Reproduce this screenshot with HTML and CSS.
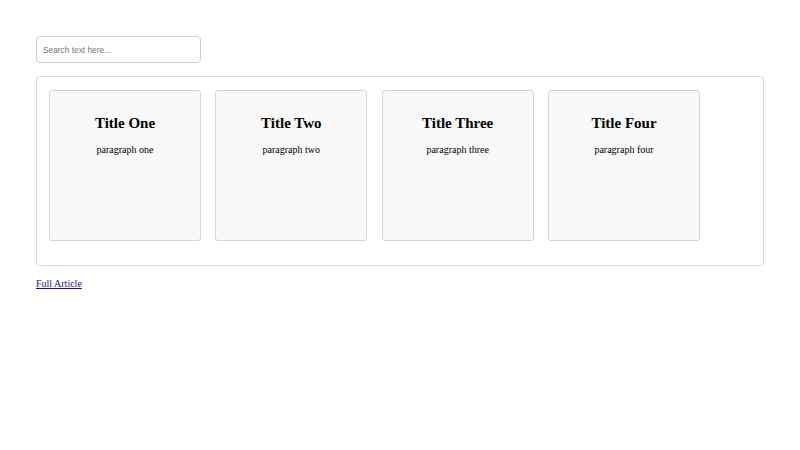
FILE: index.html
```html
<!DOCTYPE html>
<html lang="en">
<head>
<meta charset="utf-8">
<title>Cards</title>
<link rel="stylesheet" href="styles.css">
</head>
<body>
<div class="page">
  <input class="search" type="text" placeholder="Search text here...">
  <div class="panel">
    <div class="card"><h2>Title One</h2><p>paragraph one</p></div>
    <div class="card"><h2>Title Two</h2><p>paragraph two</p></div>
    <div class="card"><h2>Title Three</h2><p>paragraph three</p></div>
    <div class="card"><h2>Title Four</h2><p>paragraph four</p></div>
  </div>
  <a class="more" href="#">Full Article</a>
</div>
</body>
</html>
```
FILE: styles.css
```css
html, body {
  margin: 0;
  padding: 0;
  background: #fff;
}
body {
  font-family: "Liberation Serif", "Times New Roman", serif;
  font-size: 10px;
  color: #000;
}
.page {
  padding: 36px;
  display: flex;
  flex-direction: column;
  align-items: flex-start;
}
.search {
  box-sizing: border-box;
  width: 165px;
  height: 27px;
  margin: 0;
  padding: 0 6px;
  border: 1px solid #d0d0d0;
  border-radius: 4px;
  font-family: "Liberation Sans", Arial, sans-serif;
  font-size: 8.33px;
  color: #333;
  outline: none;
}
.search::placeholder {
  color: #757575;
}
.panel {
  box-sizing: border-box;
  margin-top: 13px;
  width: 728px;
  height: 190px;
  border: 1px solid #dadada;
  border-radius: 3px;
  padding: 13px 12px;
  display: flex;
  gap: 14.33px;
  align-items: flex-start;
}
.card {
  box-sizing: border-box;
  width: 152px;
  height: 151px;
  background: #f9f9f9;
  border: 1px solid #d6d6d6;
  border-radius: 3px;
  padding: 11px 8px;
  text-align: center;
}
.card h2 {
  font-size: 15px;
  font-weight: bold;
  margin: 13px 0 0;
  line-height: 17px;
}
.card p {
  margin: 12px 0 0;
  font-size: 10px;
  line-height: 11.5px;
}
.more {
  margin-top: 12px;
  font-size: 10px;
  line-height: 11.5px;
  color: #1a0dab;
  text-decoration: underline;
}
```
